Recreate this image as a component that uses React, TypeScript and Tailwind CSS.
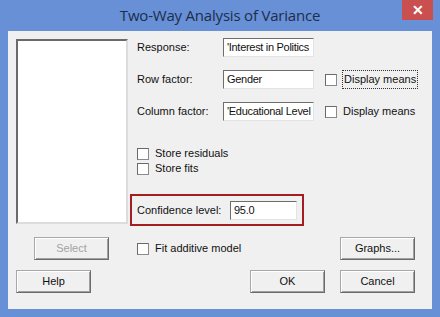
import React from "react";

const font = "font-['Liberation_Sans',Arial,sans-serif]";

const TextBox = ({ value, w }: { value: string; w: string }) => (
  <div
    className={`${w} h-[19px] bg-white border border-t-[#6e6e6e] border-l-[#6e6e6e] border-r-[#e3e3e3] border-b-[#e3e3e3] flex items-center pl-[3px] overflow-hidden whitespace-nowrap tracking-[-0.3px] text-[#111]`}
  >
    {value}
  </div>
);

const Check = () => (
  <div className="w-[12px] h-[12px] bg-white border border-[#8a8a8a] border-t-[#6a6a6a] border-l-[#6a6a6a] shrink-0" />
);

const Btn = ({
  label,
  disabled,
  className = "",
}: {
  label: string;
  disabled?: boolean;
  className?: string;
}) => (
  <button
    className={`w-[75px] h-[23px] bg-[#f0f0f0] border border-[#a7a7a7] border-r-[#6b6b6b] border-b-[#6b6b6b] shadow-[inset_1px_1px_0_#ffffff,inset_-1px_-1px_0_#a0a0a0] flex items-center justify-center ${
      disabled ? "text-[#a3a3a3]" : "text-[#111]"
    } ${className}`}
  >
    {label}
  </button>
);

export default function App() {
  return (
    <div className={`w-[440px] h-[317px] bg-[#6890d6] flex flex-col ${font} text-[11px] overflow-hidden`}>
      {/* Title bar */}
      <div className="relative h-[31px] flex items-center justify-center shrink-0">
        <span className="text-[15px] text-[#1d2d4c] font-['Open_Sans',Arial,sans-serif] tracking-[-0.2px] mt-[-1px]">
          Two-Way Analysis of Variance
        </span>
        <div className="absolute right-[7px] top-0 w-[31px] h-[20px] bg-[#c9504f] flex items-center justify-center text-white text-[14px] font-bold leading-none">
          ✕
        </div>
      </div>

      {/* Client area */}
      <div className="mx-[8px] h-[278px] bg-[#f0f0f0] flex flex-col">
        <div className="flex items-start pt-[8px] pl-[8px]">
          {/* Variable list */}
          <div className="w-[112px] h-[185px] bg-white border-2 border-t-[#6a6a6a] border-l-[#6a6a6a] border-r-[#dcdcdc] border-b-[#dcdcdc] shrink-0" />

          {/* Form */}
          <div className="ml-[2px] flex flex-col">
            <div className="flex items-center h-[19px] ml-[7px] -mt-[1px]">
              <span className="w-[86px] text-[#111]">Response:</span>
              <TextBox value="'Interest in Politics" w="w-[91px]" />
            </div>
            <div className="flex items-center h-[19px] ml-[7px] mt-[13px]">
              <span className="w-[86px] text-[#111]">Row factor:</span>
              <TextBox value="Gender" w="w-[91px]" />
              <div className="ml-[11px] flex items-center">
                <Check />
                <span className="ml-[5px] px-[1px] border border-dotted border-[#333] text-[#111]">Display means</span>
              </div>
            </div>
            <div className="flex items-center h-[19px] ml-[7px] mt-[13px]">
              <span className="w-[86px] text-[#111]">Column factor:</span>
              <TextBox value="'Educational Level" w="w-[91px]" />
              <div className="ml-[11px] flex items-center">
                <Check />
                <span className="ml-[6px] text-[#111]">Display means</span>
              </div>
            </div>

            <div className="flex items-center ml-[7px] mt-[26px] h-[13px]">
              <Check />
              <span className="ml-[6px] text-[#111]">Store residuals</span>
            </div>
            <div className="flex items-center ml-[7px] mt-[2px] h-[13px]">
              <Check />
              <span className="ml-[6px] text-[#111]">Store fits</span>
            </div>

            <div className="mt-[19px] w-[174px] h-[32px] border-2 border-[#a31d22] flex items-center pl-[5px]">
              <span className="w-[93px] text-[#111]">Confidence level:</span>
              <TextBox value="95.0" w="w-[67px]" />
            </div>
          </div>
        </div>

        {/* Bottom rows */}
        <div className="flex items-center mt-[11px] h-[23px]">
          <Btn label="Select" disabled className="ml-[26px]" />
          <div className="ml-[28px] flex items-center">
            <Check />
            <span className="ml-[6px] text-[#111]">Fit additive model</span>
          </div>
          <Btn label="Graphs..." className="ml-auto mr-[17px]" />
        </div>
        <div className="flex items-center mt-[10px] h-[23px]">
          <Btn label="Help" className="ml-[8px]" />
          <Btn label="OK" className="ml-auto" />
          <Btn label="Cancel" className="ml-[15px] mr-[17px]" />
        </div>
      </div>
    </div>
  );
}
